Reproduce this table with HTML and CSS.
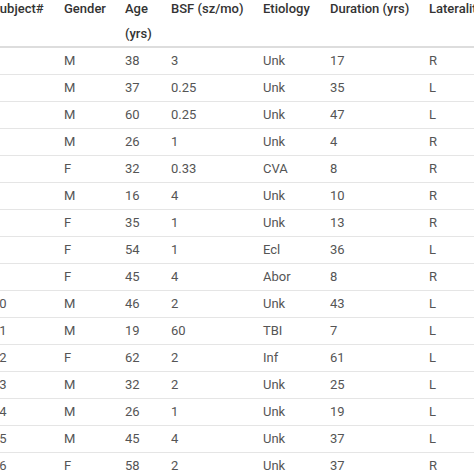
FILE: index.html
```html
<!DOCTYPE html>
<html>
<head>
<meta charset="utf-8">
<link rel="stylesheet" href="styles.css">
</head>
<body>
<div class="wrap">
<table class="data">
<colgroup>
<col class="c1"><col class="c2"><col class="c3"><col class="c4"><col class="c5"><col class="c6"><col class="c7">
</colgroup>
<thead>
<tr><th>Subject#</th><th>Gender</th><th>Age (yrs)</th><th>BSF (sz/mo)</th><th>Etiology</th><th>Duration (yrs)</th><th>Laterality</th></tr>
</thead>
<tbody>
<tr><td>1</td><td>M</td><td>38</td><td>3</td><td>Unk</td><td>17</td><td>R</td></tr>
<tr><td>2</td><td>M</td><td>37</td><td>0.25</td><td>Unk</td><td>35</td><td>L</td></tr>
<tr><td>3</td><td>M</td><td>60</td><td>0.25</td><td>Unk</td><td>47</td><td>L</td></tr>
<tr><td>4</td><td>M</td><td>26</td><td>1</td><td>Unk</td><td>4</td><td>R</td></tr>
<tr><td>5</td><td>F</td><td>32</td><td>0.33</td><td>CVA</td><td>8</td><td>R</td></tr>
<tr><td>6</td><td>M</td><td>16</td><td>4</td><td>Unk</td><td>10</td><td>R</td></tr>
<tr><td>7</td><td>F</td><td>35</td><td>1</td><td>Unk</td><td>13</td><td>R</td></tr>
<tr><td>8</td><td>F</td><td>54</td><td>1</td><td>Ecl</td><td>36</td><td>L</td></tr>
<tr><td>9</td><td>F</td><td>45</td><td>4</td><td>Abor</td><td>8</td><td>R</td></tr>
<tr><td>10</td><td>M</td><td>46</td><td>2</td><td>Unk</td><td>43</td><td>L</td></tr>
<tr><td>11</td><td>M</td><td>19</td><td>60</td><td>TBI</td><td>7</td><td>L</td></tr>
<tr><td>12</td><td>F</td><td>62</td><td>2</td><td>Inf</td><td>61</td><td>L</td></tr>
<tr><td>13</td><td>M</td><td>32</td><td>2</td><td>Unk</td><td>25</td><td>L</td></tr>
<tr><td>14</td><td>M</td><td>26</td><td>1</td><td>Unk</td><td>19</td><td>L</td></tr>
<tr><td>15</td><td>M</td><td>45</td><td>4</td><td>Unk</td><td>37</td><td>L</td></tr>
<tr><td>16</td><td>F</td><td>58</td><td>2</td><td>Unk</td><td>37</td><td>R</td></tr>
</tbody>
</table>
</div>
</body>
</html>
```
FILE: styles.css
```css
html, body {
  margin: 0;
  padding: 0;
  background: #ffffff;
  overflow: hidden;
  width: 474px;
  height: 474px;
}
.wrap {
  margin-left: -8px;
  margin-top: -4px;
  width: 560px;
}
.data {
  border-collapse: collapse;
  table-layout: fixed;
  width: 560px;
  font-family: Roboto, "Liberation Sans", sans-serif;
  font-size: 13px;
  color: #555555;
}
.c1 { width: 72px; }
.c2 { width: 61px; }
.c3 { width: 46px; }
.c4 { width: 92px; }
.c5 { width: 67px; }
.c6 { width: 99px; }
.c7 { width: 123px; }
.data th {
  text-align: left;
  vertical-align: top;
  font-weight: 500;
  color: #333333;
  line-height: 25px;
  height: 50px;
  padding: 0;
  border-bottom: 2px solid #dddddd;
  white-space: normal;
}
.data th:nth-child(4), .data th:nth-child(6), .data th:nth-child(7) {
  white-space: nowrap;
}
.data td {
  padding: 0;
  height: 26px;
  line-height: 26px;
  vertical-align: middle;
  border-bottom: 1px solid #e5e5e5;
  white-space: nowrap;
}
```
